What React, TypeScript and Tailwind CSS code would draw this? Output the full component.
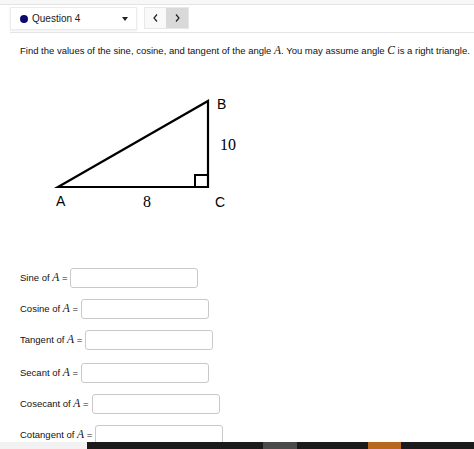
import React from 'react';

const rows = ['Sine', 'Cosine', 'Tangent', 'Secant', 'Cosecant', 'Cotangent'];

function MathA({ letter }: { letter: string }) {
    return <span className="italic text-[11.5px]" style={{ fontFamily: '"Liberation Serif", serif' }}>{letter}</span>;
}

function Triangle() {
    return (
        <svg width="220" height="130" viewBox="0 0 220 130" className="block">
            <polygon points="18,101 168,15 168,101" fill="none" stroke="#000" strokeWidth="2.2" strokeLinejoin="miter" />
            <polyline points="155,101 155,89 168,89" fill="none" stroke="#000" strokeWidth="2" />
            <text x="177" y="23" fontSize="14" fontFamily="Liberation Sans, sans-serif" fill="#000">B</text>
            <text x="180" y="64" fontSize="16" fontFamily="Liberation Serif, serif" fill="#000">10</text>
            <text x="16" y="120" fontSize="14" fontFamily="Liberation Sans, sans-serif" fill="#000">A</text>
            <text x="103" y="121" fontSize="16" fontFamily="Liberation Serif, serif" fill="#000">8</text>
            <text x="175" y="121" fontSize="14" fontFamily="Liberation Sans, sans-serif" fill="#000">C</text>
        </svg>
    );
}

export default function App() {
    return (
        <div className="relative w-[474px] h-[449px] overflow-hidden bg-white text-[#111]" style={{ fontFamily: '"Liberation Sans", sans-serif' }}>
            {/* top strip */}
            <div className="h-[5px] bg-[#f7f7f7] border-b border-[#e4e4e4]" />

            {/* question nav */}
            <div className="ml-[10px] pt-[2px] h-[28px] border-b border-[#e6e6e6] flex items-start gap-[7px]">
                <div className="w-[127px] h-[23px] bg-white border border-[#ececec] shadow-[0_1px_2px_rgba(0,0,0,0.08)] flex items-center pl-[9px] pr-[6px]">
                    <span className="w-[8px] h-[8px] rounded-full bg-[#0b0b6f]" />
                    <span className="ml-[4px] text-[10px] text-[#222]">Question 4</span>
                    <svg width="6" height="4" viewBox="0 0 6 4" className="ml-auto mr-[2px]">
                        <polygon points="0,0 6,0 3,4" fill="#222" />
                    </svg>
                </div>
                <div className="flex h-[22px] border border-[#e8e8e8]">
                    <div className="w-[21px] bg-[#f9f9f9] flex items-center justify-center">
                        <svg width="5" height="8" viewBox="0 0 5 8"><polyline points="4,0.5 1,4 4,7.5" fill="none" stroke="#222" strokeWidth="1.2" /></svg>
                    </div>
                    <div className="w-[22px] bg-[#d9d9d9] flex items-center justify-center">
                        <svg width="5" height="8" viewBox="0 0 5 8"><polyline points="1,0.5 4,4 1,7.5" fill="none" stroke="#222" strokeWidth="1.2" /></svg>
                    </div>
                </div>
            </div>

            {/* question text */}
            <p className="pl-[20px] pt-[10px] text-[9.5px] leading-[14px] whitespace-nowrap">
                Find the values of the sine, cosine, and tangent of the angle <MathA letter="A" />. You may assume angle <MathA letter="C" /> is a right triangle.
            </p>

            <div className="ml-[40px] mt-[28px]">
                <Triangle />
            </div>

            {/* answer rows */}
            <div className="pl-[20px] mt-[52px] flex flex-col gap-[11px]">
                {rows.map((r, i) => (
                    <div key={r} className={`flex items-center h-[20px] text-[9.5px] ${i === 3 ? 'mt-[2px]' : ''}`}>
                        <span>{r} of <MathA letter="A" /> =</span>
                        <div className="ml-[3px] w-[128px] h-[20px] rounded-[3px] border border-[#c9c9c9] bg-white" />
                    </div>
                ))}
            </div>

            {/* taskbar strip */}
            <div className="absolute left-0 right-0 bottom-0 h-[7px] flex">
                <div className="w-[87px] bg-[#f2f2f2]" />
                <div className="flex-1 bg-[#1b1b1b] flex">
                    <div className="w-[176px]" />
                    <div className="w-[34px] bg-[#4b4b4b]" />
                    <div className="w-[71px]" />
                    <div className="w-[33px] bg-[#b8671f]" />
                </div>
            </div>
        </div>
    );
}
